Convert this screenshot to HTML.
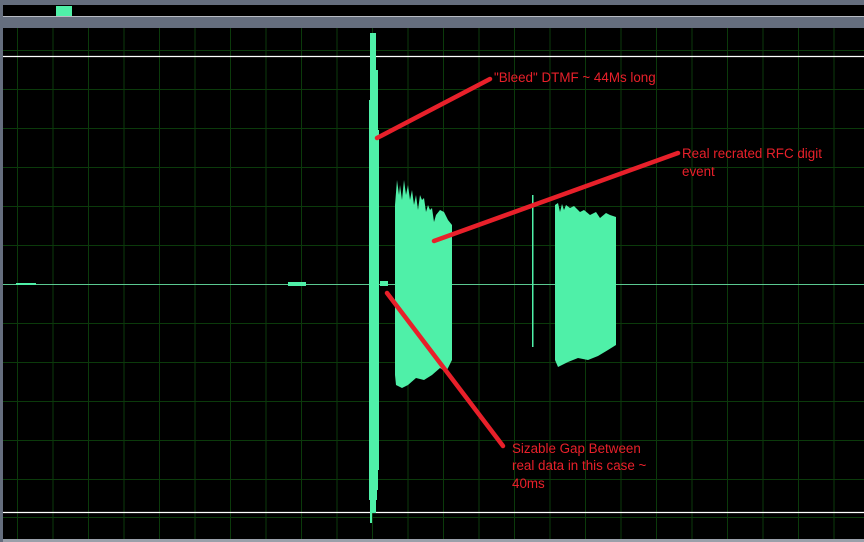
<!DOCTYPE html>
<html><head><style>
html,body{margin:0;padding:0;background:#656e7e;width:864px;height:542px;overflow:hidden}
text{font-family:"Liberation Sans",sans-serif;font-size:13.4px;fill:#e8202a}
</style></head><body>
<svg width="864" height="542" xmlns="http://www.w3.org/2000/svg">
<rect x="0" y="0" width="864" height="542" fill="#656e7e"/>
<rect x="3" y="5" width="861" height="11" fill="#000"/>
<rect x="3" y="16" width="861" height="1" fill="#b8bcc4"/>
<rect x="56" y="6" width="16" height="10" fill="#4ff0a8"/>
<rect x="3" y="28" width="861" height="511" fill="#000"/>
<g stroke="#0b3a0b" stroke-width="1">
<path d="M17.5 28V539M53 28V539M88.5 28V539M124 28V539M159.5 28V539M195 28V539M230.5 28V539M266 28V539M301.5 28V539M337 28V539M372.5 28V539M408 28V539M443.5 28V539M479 28V539M514.5 28V539M550 28V539M585.5 28V539M621 28V539M656.5 28V539M692 28V539M727.5 28V539M763 28V539M798.5 28V539M834 28V539"/>
<path d="M3 50.5H864M3 89.5H864M3 128.5H864M3 167.5H864M3 206.5H864M3 245.5H864M3 323.5H864M3 362.5H864M3 401.5H864M3 440.5H864M3 479.5H864M3 517.5H864"/>
</g>
<path d="M3 56.5H864M3 512.5H864" stroke="#fff" stroke-width="1.2"/>
<path d="M3 284.5H864" stroke="#5ac890" stroke-width="1"/>
<g fill="#4ff0a8">
<rect x="370" y="33" width="2" height="490"/>
<rect x="372" y="33" width="4" height="480"/>
<rect x="369" y="100" width="8" height="400"/>
<rect x="376" y="70" width="2" height="420"/>
<rect x="378" y="130" width="1" height="340"/>
<polygon points="395,205 397,180 399,195 400,185 402,200 404,180 406,195 408,185 410,200 412,190 414,205 416,195 418,210 420,195 422,200 424,198 426,212 428,205 430,210 432,208 434,222 436,215 440,210 444,212 448,220 452,225 452,360 446,372 440,368 432,375 424,380 416,378 408,385 402,388 396,385 395,375"/>
<polygon points="555,205 558,203 560,212 562,204 564,210 566,205 570,208 574,206 580,212 584,210 590,215 596,212 600,218 606,213 610,215 616,217 616,345 608,350 598,356 588,360 578,358 568,362 558,367 555,360"/>
<rect x="532" y="195" width="1.5" height="152"/>
<rect x="16" y="283" width="20" height="2"/>
<rect x="288" y="282" width="18" height="4"/>
<rect x="380" y="281" width="8" height="5"/>
</g>
<g stroke="#e8202a" stroke-width="4.5" stroke-linecap="round">
<line x1="377" y1="138" x2="490" y2="79"/>
<line x1="434" y1="241" x2="678" y2="153"/>
<line x1="387" y1="293" x2="503" y2="446"/>
</g>
<text x="494" y="82">"Bleed" DTMF ~ 44Ms long</text>
<text x="682" y="158">Real recrated RFC digit</text>
<text x="682" y="176">event</text>
<text x="512" y="453">Sizable Gap Between</text>
<text x="512" y="470">real data in this case ~</text>
<text x="512" y="488">40ms</text>
<rect x="3" y="539" width="861" height="3" fill="#9aa0aa"/>
</svg>
</body></html>
